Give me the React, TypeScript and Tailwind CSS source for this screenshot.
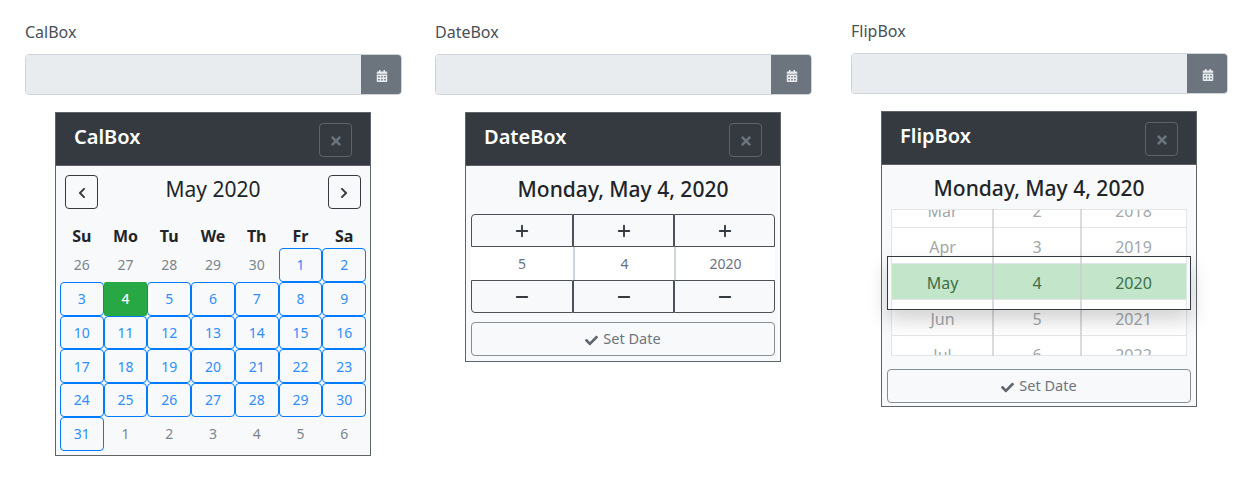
import { FaCalendarAlt, FaCheck, FaChevronLeft, FaChevronRight, FaTimes } from 'react-icons/fa';
import { Minus, Plus } from 'lucide-react';
import type { ReactNode } from 'react';

const weekDays = ['Su', 'Mo', 'Tu', 'We', 'Th', 'Fr', 'Sa'];

const days = [
  ...[26, 27, 28, 29, 30].map((d) => ({ d, off: true })),
  ...Array.from({ length: 31 }, (_, i) => ({ d: i + 1, off: false })),
  ...[1, 2, 3, 4, 5, 6].map((d) => ({ d, off: true })),
];

const wheel = [
  { month: 'Mar', day: '2', year: '2018' },
  { month: 'Apr', day: '3', year: '2019' },
  { month: 'May', day: '4', year: '2020' },
  { month: 'Jun', day: '5', year: '2021' },
  { month: 'Jul', day: '6', year: '2022' },
];

const Field = ({ label }: { label: string }) => (
  <div>
    <div className="h-[22px] text-[16px] leading-[22px] text-[#495057]">{label}</div>
    <div className="mt-[11px] flex h-[41px] overflow-hidden rounded-[4px] border border-[#ced4da]">
      <div className="flex-1 bg-[#e9ecef]" />
      <div className="-my-px -mr-px flex w-[41px] items-center justify-center bg-[#6c757d] text-[#e9ecef]">
        <FaCalendarAlt className="mt-[3px] text-[12px]" />
      </div>
    </div>
  </div>
);

const Popup = ({ title, className, children }: { title: string; className: string; children: ReactNode }) => (
  <div className={`w-[316px] border border-[#5f6468] bg-[#f8f9fa] ${className}`}>
    <div className="flex h-[53px] items-center justify-between border-b border-[#5a6065] bg-[#343a40] pl-[18px] pr-[18px]">
      <div className="-mt-[4px] text-[20px] font-semibold text-white">{title}</div>
      <div className="mt-[1px] flex h-[34px] w-[33px] items-center justify-center rounded-[4px] border border-[#5d6369] text-[#6c757d]">
        <FaTimes className="mt-[2px] text-[14px]" />
      </div>
    </div>
    {children}
  </div>
);

const DateTitle = () => (
  <div className="pt-[9px] text-center text-[21px] leading-[28px] font-medium text-[#212529]">Monday, May 4, 2020</div>
);

const SetDate = ({ className }: { className: string }) => (
  <div
    className={`flex h-[34px] items-center justify-center gap-[5px] rounded-[4px] border border-[#868e96] text-[14.5px] text-[#6c757d] ${className}`}
  >
    <FaCheck className="mt-[3px] text-[13px] text-[#5f666d]" />
    Set Date
  </div>
);

const CalBox = () => (
  <Popup title="CalBox" className="ml-[30px] mt-[17px] h-[344px] w-[315px]">
    <div className="flex items-start justify-between px-[9px] pt-[9px]">
      <div className="flex h-[34px] w-[33px] items-center justify-center rounded-[4px] border border-[#343a40] text-[#343a40]">
        <FaChevronLeft className="mt-[2px] text-[12px]" />
      </div>
      <div className="text-[21px] leading-[28px] text-[#212529]">May 2020</div>
      <div className="flex h-[34px] w-[33px] items-center justify-center rounded-[4px] border border-[#343a40] text-[#343a40]">
        <FaChevronRight className="mt-[2px] text-[12px]" />
      </div>
    </div>
    <div className="mt-[15px] grid grid-cols-7 px-[4px]">
      {weekDays.map((w) => (
        <div key={w} className="h-[24px] text-center text-[16px] leading-[24px] font-bold text-[#212529]">
          {w}
        </div>
      ))}
      {days.map(({ d, off }, i) =>
        off ? (
          <div key={i} className="flex h-[33.75px] items-center justify-center text-[14px] text-[#7d858c]">
            {d}
          </div>
        ) : d === 4 ? (
          <div
            key={i}
            className="flex h-[33.75px] items-center justify-center rounded-[2px] bg-[#28a745] text-[14px] font-medium text-white"
          >
            {d}
          </div>
        ) : (
          <div
            key={i}
            className="flex h-[33.75px] items-center justify-center rounded-[4px] border border-[#007bff] text-[14px] text-[#2f8fff]"
          >
            {d}
          </div>
        ),
      )}
    </div>
  </Popup>
);

const DateBox = () => (
  <Popup title="DateBox" className="ml-[30px] mt-[17px] h-[250px]">
    <DateTitle />
    <div className="mt-[11px] grid grid-cols-[102px_101px_101px] px-[5px]">
      {[0, 1, 2].map((i) => (
        <div
          key={i}
          className={`flex h-[33px] items-center justify-center border border-[#4b5157] text-[#343a40] ${
            i === 0 ? 'rounded-tl-[4px]' : i === 2 ? 'rounded-tr-[4px]' : ''
          }`}
        >
          <Plus size={18} strokeWidth={2.5} />
        </div>
      ))}
      {['5', '4', '2020'].map((v, i) => (
        <div
          key={v}
          className={`flex h-[33px] items-center justify-center bg-white text-[14px] text-[#6b7280] ${
            i > 0 ? 'border-l-2 border-[#ced4da]' : ''
          }`}
        >
          {v}
        </div>
      ))}
      {[0, 1, 2].map((i) => (
        <div
          key={i}
          className={`flex h-[33px] items-center justify-center border border-[#4b5157] text-[#343a40] ${
            i === 0 ? 'rounded-bl-[4px]' : i === 2 ? 'rounded-br-[4px]' : ''
          }`}
        >
          <Minus size={18} strokeWidth={2.5} />
        </div>
      ))}
    </div>
    <SetDate className="mx-[5px] mt-[9px]" />
  </Popup>
);

const FlipBox = () => (
  <Popup title="FlipBox" className="ml-[30px] mt-[17px] h-[296px]">
    <DateTitle />
    <div className="relative mt-[7px]">
      <div className="mx-[9px] h-[147px] overflow-hidden border border-[#e3e6e9] bg-white">
        <div className="-mt-[18px]">
          {wheel.map((row) => (
            <div
              key={row.month}
              className={`grid h-[36px] grid-cols-[101px_88px_1fr] border-b border-[#e3e6e9] text-[16px] leading-[38px] ${
                row.month === 'May' ? 'bg-[#c3e6cb] text-[#3c7049]' : 'text-[#a2a7ab]'
              }`}
            >
              <div className="text-center">{row.month}</div>
              <div className="text-center">{row.day}</div>
              <div className="text-center">{row.year}</div>
            </div>
          ))}
        </div>
      </div>
      <div className="pointer-events-none absolute inset-y-0 left-[110px] w-[2px] bg-[#c9cccf]/70" />
      <div className="pointer-events-none absolute inset-y-0 left-[198px] w-[2px] bg-[#c9cccf]/70" />
      <div className="pointer-events-none absolute left-[5px] top-[47px] h-[54px] w-[304px] border border-[#343a40] shadow-[0_10px_20px_rgba(0,0,0,0.18)]" />
    </div>
    <SetDate className="mx-[5px] mt-[13px]" />
  </Popup>
);

export default function App() {
  return (
    <div className="flex h-[490px] w-[1246px] overflow-hidden bg-white pl-[25px] font-['Noto_Sans','Open_Sans',sans-serif]">
      <div className="w-[377px] pt-[21px]">
        <Field label="CalBox" />
        <CalBox />
      </div>
      <div className="ml-[33px] w-[377px] pt-[21px]">
        <Field label="DateBox" />
        <DateBox />
      </div>
      <div className="ml-[39px] w-[377px] pt-[20px]">
        <Field label="FlipBox" />
        <FlipBox />
      </div>
    </div>
  );
}
